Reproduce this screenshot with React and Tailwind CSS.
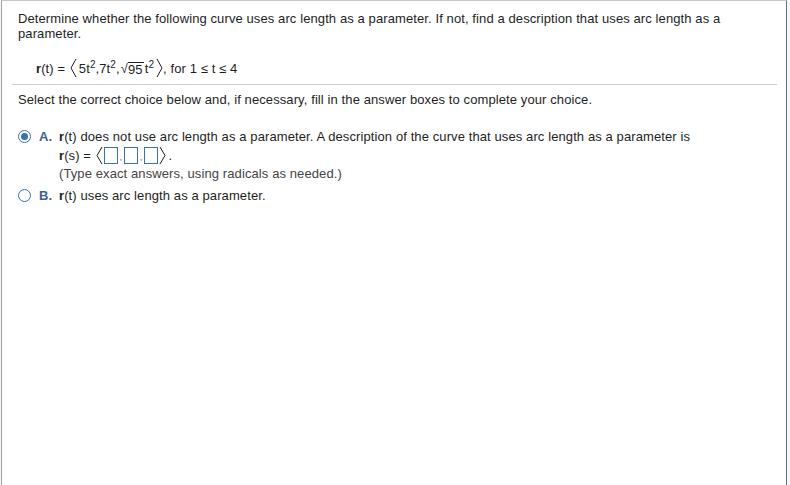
import React from "react";

function Box() {
  return <span className="inline-block w-[14px] h-[17px] border border-[#3b6fb6] bg-white align-middle"></span>;
}

function Angle({ right = false, h = 20 }) {
  return (
    <svg width="7" height={h} viewBox={`0 0 7 ${h}`} className="shrink-0">
      {right ? (
        <polyline points={`1,1 6,${h / 2} 1,${h - 1}`} fill="none" stroke="#1e1e1e" strokeWidth="1" />
      ) : (
        <polyline points={`6,1 1,${h / 2} 6,${h - 1}`} fill="none" stroke="#1e1e1e" strokeWidth="1" />
      )}
    </svg>
  );
}

export default function App() {
  return (
    <div className="w-[790px] h-[485px] bg-[#f4f8fb] overflow-hidden" style={{ fontFamily: '"Liberation Sans", Arial, sans-serif' }}>
      <div className="ml-[1px] w-[786px] h-[485px] bg-white border-l border-t border-r border-l-[#a0a0a0] border-t-[#c8c8c8] border-r-[#6e6e6e] text-[13px] leading-[15px] tracking-[0.1px] text-[#1e1e1e]">
        <div className="ml-[10px] w-[765px]">
          <div className="pl-[6px] pt-[10px]">
            <p className="pr-[40px]">Determine whether the following curve uses arc length as a parameter. If not, find a description that uses arc length as a parameter.</p>
            <div className="pl-[18px] mt-[16px] h-[22px] flex items-center">
              <span className="whitespace-pre"><b className="font-bold">r</b>(t) = </span>
              <span className="ml-[1px] mr-[2px] flex"><Angle /></span>
              <span>5t<sup className="text-[10px]">2</sup>,7t<sup className="text-[10px]">2</sup>,</span>
              <span className="inline-flex items-end ml-[1px]">
                <span className="text-[13px]">√</span>
                <span className="border-t border-[#1e1e1e] leading-[13px] mt-[1px] pr-[1px]">95</span>
              </span>
              <span className="ml-[1px]">t<sup className="text-[10px]">2</sup></span>
              <span className="ml-[2px] flex"><Angle right /></span>
              <span className="whitespace-pre">, for 1 ≤ t ≤ 4</span>
            </div>
          </div>
          <div className="mt-[5px] border-t border-[#cfcfcf]"></div>
          <div className="pl-[6px] pt-[7px]">
            <p>Select the correct choice below and, if necessary, fill in the answer boxes to complete your choice.</p>
            <div className="mt-[22px] flex">
              <span className="mt-[1px] w-[13px] h-[13px] rounded-full border border-[#3b6fb6] flex items-center justify-center shrink-0">
                <span className="w-[7px] h-[7px] rounded-full bg-[#3b6fb6]"></span>
              </span>
              <span className="ml-[8px] w-[20px] font-bold text-[#40628f]">A.</span>
              <div>
                <p><b className="font-bold">r</b>(t) does not use arc length as a parameter. A description of the curve that uses arc length as a parameter is</p>
                <div className="mt-[2px] flex items-center h-[18px]">
                  <span className="whitespace-pre"><b className="font-bold">r</b>(s) = </span>
                  <span className="ml-[1px] mr-[1px] flex"><Angle h={19} /></span>
                  <Box />
                  <span className="text-[8px] leading-[8px] self-end mb-[2px] px-[2px]">,</span>
                  <Box />
                  <span className="text-[8px] leading-[8px] self-end mb-[2px] px-[2px]">,</span>
                  <Box />
                  <span className="ml-[1px] flex"><Angle right h={19} /></span>
                  <span className="ml-[2px]">.</span>
                </div>
                <p className="mt-[2px] text-[#444]">(Type exact answers, using radicals as needed.)</p>
              </div>
            </div>
            <div className="mt-[7px] flex">
              <span className="mt-[1px] w-[13px] h-[13px] rounded-full border border-[#3b6fb6] shrink-0"></span>
              <span className="ml-[8px] w-[20px] font-bold text-[#40628f]">B.</span>
              <p><b className="font-bold">r</b>(t) uses arc length as a parameter.</p>
            </div>
          </div>
        </div>
      </div>
    </div>
  );
}
